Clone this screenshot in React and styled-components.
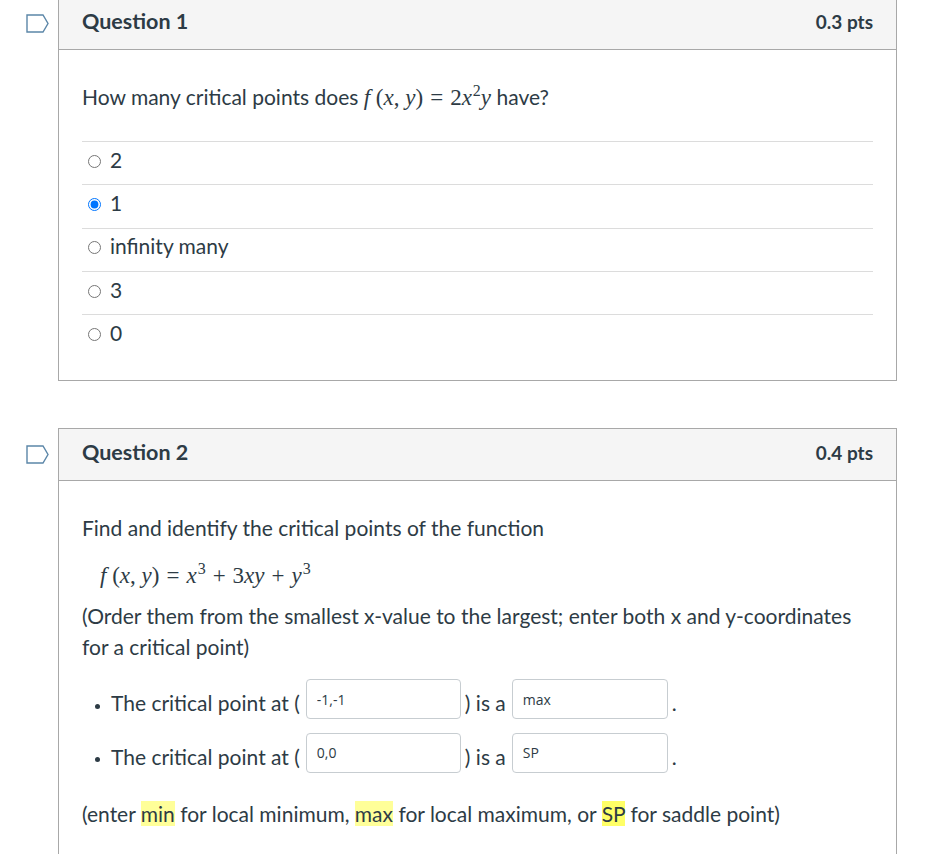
import React from 'react';
import styled, { createGlobalStyle } from 'styled-components';

const GlobalStyle = createGlobalStyle`
  html, body {
    margin: 0;
    padding: 0;
    background: #fff;
  }
  body {
    font-family: Lato, "Noto Sans", sans-serif;
    color: #2d3b45;
  }
`;

const Page = styled.div`
  padding: 0 38px 0 26px;
  margin-top: -3px;
`;

const QuestionRow = styled.div`
  display: flex;
  align-items: flex-start;
  margin-bottom: 47px;
`;

const FlagCol = styled.div`
  width: 32px;
  flex: none;
  padding-top: 17px;
`;

const Card = styled.div`
  flex: 1;
  border: 1px solid #a8a8a8;
  background: #fff;
`;

const Header = styled.div`
  height: 52px;
  box-sizing: border-box;
  padding: 0 23px 5px;
  background: #f5f5f5;
  border-bottom: 1px solid #a8a8a8;
  display: flex;
  align-items: center;
  justify-content: space-between;
`;

const Title = styled.h2`
  margin: 0;
  font-size: 21.5px;
  font-weight: 700;
`;

const Points = styled.span`
  font-size: 19px;
  font-weight: 700;
`;

const Body = styled.div`
  padding: ${(p) => p.$pad};
  font-size: 21px;
  line-height: 31px;
`;

const Text = styled.p`
  margin: ${(p) => p.$m || '0'};
`;

const Math = styled.span`
  font-family: "Liberation Serif", "DejaVu Serif", serif;
  font-size: 23px;
  white-space: nowrap;
  i {
    font-style: italic;
  }
  sup {
    font-size: 16px;
    line-height: 0;
    vertical-align: 9px;
    margin-left: 1px;
  }
`;

const Op = styled.span`
  margin: 0 7px;
`;

const Answers = styled.div`
  margin-top: 28px;
`;

const Answer = styled.label`
  display: flex;
  align-items: center;
  height: 43.3px;
  box-sizing: border-box;
  padding-bottom: 8px;
  border-top: 1px solid #dcdcdc;
  font-size: 21px;
`;

const Radio = styled.input`
  width: 13px;
  height: 13px;
  margin: 4px 9px 0 6px;
  accent-color: #0075ff;
`;

const Bullets = styled.ul`
  margin: 17px 0 0;
  padding-left: 29px;
`;

const Bullet = styled.li`
  margin-bottom: 10px;
  line-height: 40px;
  &::marker {
    font-size: 14px;
  }
`;

const Field = styled.input`
  box-sizing: border-box;
  width: ${(p) => p.$w}px;
  height: 40px;
  margin: 0 4px 0 6px;
  padding: 0 10px;
  border: 1px solid #c7cdd1;
  border-radius: 4px;
  font-family: "Open Sans", Lato, sans-serif;
  font-size: 14px;
  color: #2d3b45;
  vertical-align: 6px;
  background: #fff;
`;

const Mark = styled.span`
  background: ${(p) => p.$c};
`;

const Flag = () => (
  <svg width="23" height="19" viewBox="0 0 23 19">
    <path d="M1 1 H17 L22 9.5 L17 18 H1 Z" fill="#fff" stroke="#5b86a8" strokeWidth="1.4" />
  </svg>
);

const answers = [
  { label: '2' },
  { label: '1', checked: true },
  { label: 'infinity many' },
  { label: '3' },
  { label: '0' },
];

export default function App() {
  return (
    <>
      <GlobalStyle />
      <Page>
        <QuestionRow>
          <FlagCol>
            <Flag />
          </FlagCol>
          <Card>
            <Header>
              <Title>Question 1</Title>
              <Points>0.3 pts</Points>
            </Header>
            <Body $pad="31px 23px 23px">
              <Text>
                How many critical points does{' '}
                <Math>
                  <i>f</i> (<i>x</i>, <i>y</i>)<Op>=</Op>2<i>x</i>
                  <sup>2</sup>
                  <i>y</i>
                </Math>{' '}
                have?
              </Text>
              <Answers>
                {answers.map((a) => (
                  <Answer key={a.label}>
                    <Radio type="radio" name="q1" defaultChecked={a.checked} />
                    {a.label}
                  </Answer>
                ))}
              </Answers>
            </Body>
          </Card>
        </QuestionRow>

        <QuestionRow>
          <FlagCol>
            <Flag />
          </FlagCol>
          <Card>
            <Header>
              <Title>Question 2</Title>
              <Points>0.4 pts</Points>
            </Header>
            <Body $pad="31px 23px 40px">
              <Text>Find and identify the critical points of the function</Text>
              <Text $m="16px 0 0 18px">
                <Math>
                  <i>f</i> (<i>x</i>, <i>y</i>)<Op>=</Op><i>x</i>
                  <sup>3</sup>
                  <Op>+</Op>3<i>xy</i>
                  <Op>+</Op>
                  <i>y</i>
                  <sup>3</sup>
                </Math>
              </Text>
              <Text $m="9px 0 0">
                (Order them from the smallest x-value to the largest; enter both x and y-coordinates for a
                critical point)
              </Text>
              <Bullets>
                <Bullet>
                  The critical point at (<Field $w={155} defaultValue="-1,-1" />) is a
                  <Field $w={156} defaultValue="max" />.
                </Bullet>
                <Bullet>
                  The critical point at (<Field $w={155} defaultValue="0,0" />) is a
                  <Field $w={156} defaultValue="SP" />.
                </Bullet>
              </Bullets>
              <Text $m="22px 0 0">
                (enter <Mark $c="#ffff99">min</Mark> for local minimum, <Mark $c="#ffff99">max</Mark> for
                local maximum, or <Mark $c="#ffff66">SP</Mark> for saddle point)
              </Text>
            </Body>
          </Card>
        </QuestionRow>
      </Page>
    </>
  );
}
